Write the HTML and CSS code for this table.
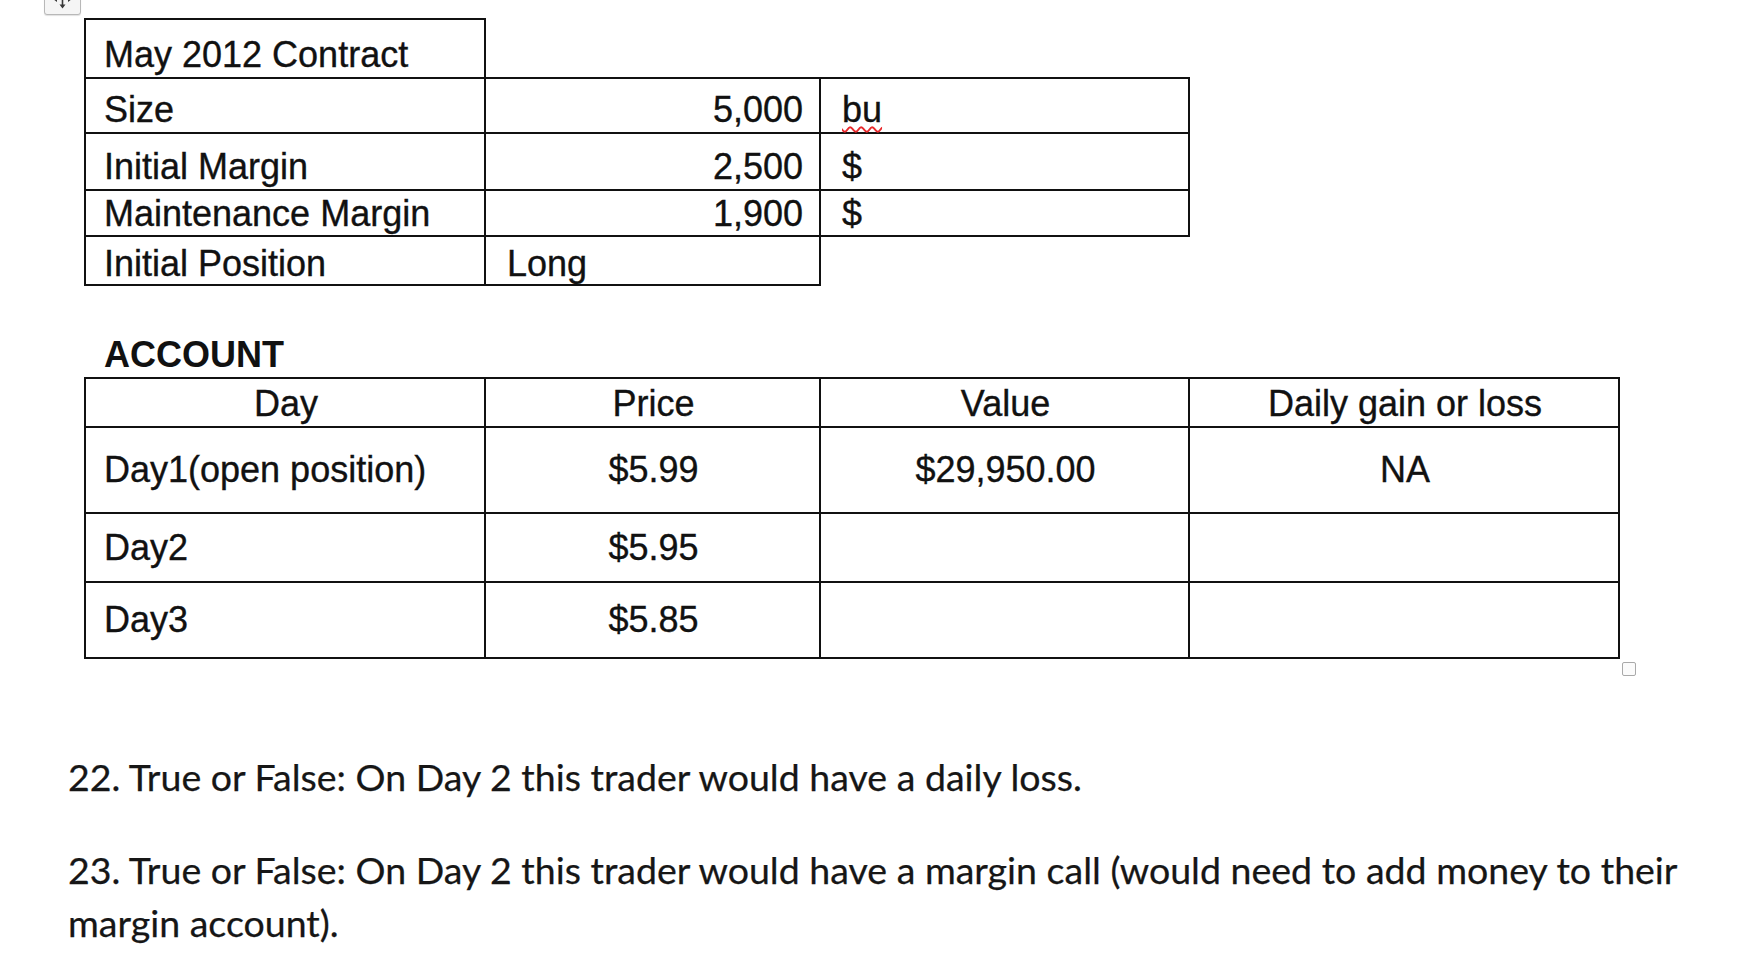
FILE: index.html
```html
<!DOCTYPE html>
<html lang="en">
<head>
<meta charset="utf-8">
<title>May 2012 Contract</title>
<link rel="stylesheet" href="styles.css">
</head>
<body>
<div class="page">
  <div class="move-handle">
    <svg width="37" height="32" viewBox="0 0 37 32">
      <path d="M18.5 8 V24 M10.5 16 H26.5" stroke="#3a3a3a" stroke-width="1.6" fill="none"/>
      <path d="M15.5 21.5 L18.5 25.5 L21.5 21.5 Z M15.5 10.5 L18.5 6.5 L21.5 10.5 Z M13 13 L9 16 L13 19 Z M24 13 L28 16 L24 19 Z" fill="#3a3a3a"/>
    </svg>
  </div>

  <table class="contract">
    <colgroup>
      <col class="w1"><col class="w2"><col class="w3">
    </colgroup>
    <tr class="r1"><td class="lbl">May 2012 Contract</td><td class="blank"></td><td class="blank"></td></tr>
    <tr class="r2"><td class="lbl">Size</td><td class="num">5,000</td><td class="unit"><span class="spell">bu</span></td></tr>
    <tr class="r3"><td class="lbl">Initial Margin</td><td class="num">2,500</td><td class="unit">$</td></tr>
    <tr class="r4"><td class="lbl">Maintenance Margin</td><td class="num">1,900</td><td class="unit">$</td></tr>
    <tr class="r5"><td class="lbl">Initial Position</td><td class="txt">Long</td><td class="blank"></td></tr>
  </table>

  <div class="account-title">ACCOUNT</div>

  <div class="account-wrap">
    <table class="account">
      <colgroup>
        <col class="w1"><col class="w2"><col class="w3"><col class="w4">
      </colgroup>
      <tr class="h"><th>Day</th><th>Price</th><th>Value</th><th>Daily gain or loss</th></tr>
      <tr class="d1"><td class="day">Day1(open position)</td><td>$5.99</td><td>$29,950.00</td><td>NA</td></tr>
      <tr class="d2"><td class="day">Day2</td><td>$5.95</td><td></td><td></td></tr>
      <tr class="d3"><td class="day">Day3</td><td>$5.85</td><td></td><td></td></tr>
    </table>
    <div class="resize-handle"></div>
  </div>

  <p class="q q1">22. True or False: On Day 2 this trader would have a daily loss.</p>
  <p class="q q2">23. True or False: On Day 2 this trader would have a margin call (would need to add money to their margin account).</p>
</div>
</body>
</html>
```

FILE: styles.css
```css
html, body {
  margin: 0;
  padding: 0;
  background: #ffffff;
}

body {
  width: 1752px;
  height: 980px;
  overflow: hidden;
  font-family: "Liberation Sans", Arial, sans-serif;
  color: #111;
}

.page {
  position: relative;
  padding-top: 18px;
}

/* Word table move handle (partly cut off at top) */
.move-handle {
  position: absolute;
  left: 44px;
  top: -17px;
  width: 35px;
  height: 30px;
  border: 1.5px solid #b8b8b8;
  border-radius: 3px;
  background: #f5f5f5;
  box-shadow: 0 1px 1px rgba(0,0,0,0.12);
  overflow: hidden;
}

.move-handle svg {
  display: block;
  margin: -1px 0 0 -1px;
}

/* ---------- contract table ---------- */
.contract {
  border-collapse: collapse;
  table-layout: fixed;
  width: 1104px;
  margin-left: 84px;
  font-size: 36px;
  line-height: 36px;
  -webkit-text-stroke: 0.35px #111;
}

.contract .w1 { width: 400px; }
.contract .w2 { width: 335px; }
.contract .w3 { width: 369px; }

.contract td {
  border: 2px solid #111;
  padding: 0 16px 4px 18px;
  vertical-align: bottom;
  white-space: nowrap;
}

.contract td.blank {
  border: none;
}

.contract td.num {
  text-align: right;
}

.contract td.unit {
  padding-left: 21px;
}

.contract td.txt {
  padding-left: 21px;
}

.contract .r1 { height: 59px; }
.contract .r2 { height: 55px; }
.contract .r3 { height: 57px; }
.contract .r4 { height: 46px; }
.contract .r5 { height: 49px; }

.contract .r1 td.lbl { padding-bottom: 4px; }
.contract .r4 td { padding-bottom: 3px; }
.contract .r5 td { padding-bottom: 2px; }

.spell {
  text-decoration: underline wavy #e8282b;
  text-decoration-thickness: 1.5px;
  text-underline-offset: 4px;
}

/* ---------- account ---------- */
.account-title {
  margin: 51px 0 0 104px;
  font-size: 36px;
  line-height: 36px;
  font-weight: bold;
  color: #111;
}

.account-wrap {
  position: relative;
  width: 1534px;
  margin: 4px 0 0 84px;
}

.account {
  border-collapse: collapse;
  table-layout: fixed;
  width: 1534px;
  font-size: 36px;
  line-height: 36px;
  -webkit-text-stroke: 0.35px #111;
}

.account .w1 { width: 400px; }
.account .w2 { width: 335px; }
.account .w3 { width: 369px; }
.account .w4 { width: 430px; }

.account th,
.account td {
  border: 2px solid #111;
  padding: 0 16px 0 18px;
  text-align: center;
  vertical-align: middle;
  font-weight: normal;
  white-space: nowrap;
}

.account td.day {
  text-align: left;
}

.account .h { height: 49px; }
.account .d1 { height: 86px; }
.account .d2 { height: 69px; }
.account .d3 { height: 76px; }

.account .h th { padding-top: 3px; }

.resize-handle {
  position: absolute;
  left: 1538px;
  top: 285px;
  width: 12px;
  height: 12px;
  border: 1.5px solid #a9a9a9;
  border-radius: 2px;
  background: #fbfbfb;
}

/* ---------- questions ---------- */
.q {
  margin: 0 0 0 68px;
  width: 1672px;
  font-family: Lato, "Open Sans", sans-serif;
  font-size: 37.5px;
  line-height: 53px;
  color: #161616;
  -webkit-text-stroke: 0.25px #161616;
}

.q1 { margin-top: 91px; }
.q2 { margin-top: 40px; }
```
